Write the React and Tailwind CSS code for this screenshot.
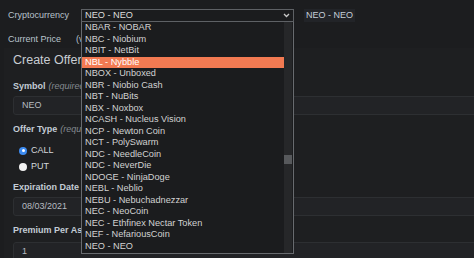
import React from "react";

// options visible in the open list
const coins = [
  "NBAR - NOBAR",
  "NBC - Niobium",
  "NBIT - NetBit",
  "NBL - Nybble",
  "NBOX - Unboxed",
  "NBR - Niobio Cash",
  "NBT - NuBits",
  "NBX - Noxbox",
  "NCASH - Nucleus Vision",
  "NCP - Newton Coin",
  "NCT - PolySwarm",
  "NDC - NeedleCoin",
  "NDC - NeverDie",
  "NDOGE - NinjaDoge",
  "NEBL - Neblio",
  "NEBU - Nebuchadnezzar",
  "NEC - NeoCoin",
  "NEC - Ethfinex Nectar Token",
  "NEF - NefariousCoin",
  "NEO - NEO",
];

function Label({ title, hint }) {
  return (
    <div className="h-[11px] flex items-center whitespace-nowrap text-[9px] leading-none">
      <span className="font-bold text-[#c3ccd5]">{title}</span>
      {hint && <span className="italic text-[#858a90] ml-[3px]">{hint}</span>}
    </div>
  );
}

function Field({ value }) {
  return (
    <div className="h-[19px] w-[470px] flex items-center px-[8px] rounded-[3px] border border-[#2d2f32] bg-[#222326] text-[9px] text-[#b6bbc0]">
      {value}
    </div>
  );
}

export default function App() {
  const selected = 3;

  return (
    <div className="relative w-[474px] h-[258px] overflow-hidden bg-[#1c1d1f] font-['Liberation_Sans',Arial,sans-serif]">
      {/* top row */}
      <div className="flex items-center h-[13px] mt-[9px] pl-[8px]">
        <div className="w-[73px] text-[9px] leading-none text-[#b8c3cc]">Cryptocurrency</div>
        <div className="w-[213px] h-[13px] flex items-center justify-between pl-[3px] pr-[3px] border border-[#5e6165] bg-[#1b1c1e] text-[9.2px] leading-none text-[#dcdcdc]">
          <span>NEO - NEO</span>
          <svg width="7" height="5" viewBox="0 0 7 5">
            <path d="M1 1 L3.5 3.5 L6 1" stroke="#c8c8c8" strokeWidth="1.3" fill="none" />
          </svg>
        </div>
        <div className="ml-[10px] px-[2px] py-[2px] bg-[#222428] text-[9px] leading-none text-[#c5cfd8]">NEO - NEO</div>
      </div>

      {/* current price */}
      <div className="flex items-center h-[11px] mt-[12px] pl-[8px] text-[9px] leading-none text-[#b8c3cc]">
        <span className="w-[68px]">Current Price</span>
        <span>(value)</span>
      </div>

      {/* create offer card */}
      <div className="ml-[4px] mt-[3px] pl-[9px] pt-[5px] bg-[#1e1f21]">
        <div className="h-[14px] flex items-center text-[12.5px] leading-none text-[#c9ced3]">Create Offer</div>

        <div className="mt-[14px]">
          <Label title="Symbol" hint="(required)" />
        </div>
        <div className="mt-[4px]">
          <Field value="NEO" />
        </div>

        <div className="mt-[9px]">
          <Label title="Offer Type" hint="(required)" />
        </div>
        <div className="mt-[10px] h-[11px] flex items-center pl-[6px] text-[9px] leading-none text-[#d4d8dc]">
          <span className="w-[8px] h-[8px] rounded-full bg-[#3d8bf0] flex items-center justify-center">
            <span className="w-[3px] h-[3px] rounded-full bg-white" />
          </span>
          <span className="ml-[4px]">CALL</span>
        </div>
        <div className="mt-[5px] h-[11px] flex items-center pl-[6px] text-[9px] leading-none text-[#d4d8dc]">
          <span className="w-[8px] h-[8px] rounded-full bg-[#f2f2f2]" />
          <span className="ml-[4px]">PUT</span>
        </div>

        <div className="mt-[10px]">
          <Label title="Expiration Date" hint="(required)" />
        </div>
        <div className="mt-[4px]">
          <Field value="08/03/2021" />
        </div>

        <div className="mt-[9px]">
          <Label title="Premium Per Asset" hint="(required)" />
        </div>
        <div className="mt-[6px]">
          <Field value="1" />
        </div>
      </div>

      {/* open select list */}
      <div className="absolute left-[81px] top-[22px] w-[213px] h-[232px] flex border-x border-b border-[#686b6f] bg-[#1b1c1e]">
        <div className="w-[202px]">
          {coins.map((c, i) => (
            <div
              key={i}
              className={
                i === selected
                  ? "h-[11.5px] flex items-center pl-[3px] text-[9.2px] leading-none whitespace-nowrap bg-[#f27a52] text-white"
                  : "h-[11.5px] flex items-center pl-[3px] text-[9.2px] leading-none whitespace-nowrap text-[#d2d2d2]"
              }
            >
              {c}
            </div>
          ))}
        </div>
        <div className="relative w-[8px] bg-[#262729]">
          <div className="absolute left-0 top-[133px] w-[8px] h-[9px] bg-[#57595c]" />
        </div>
      </div>
    </div>
  );
}
